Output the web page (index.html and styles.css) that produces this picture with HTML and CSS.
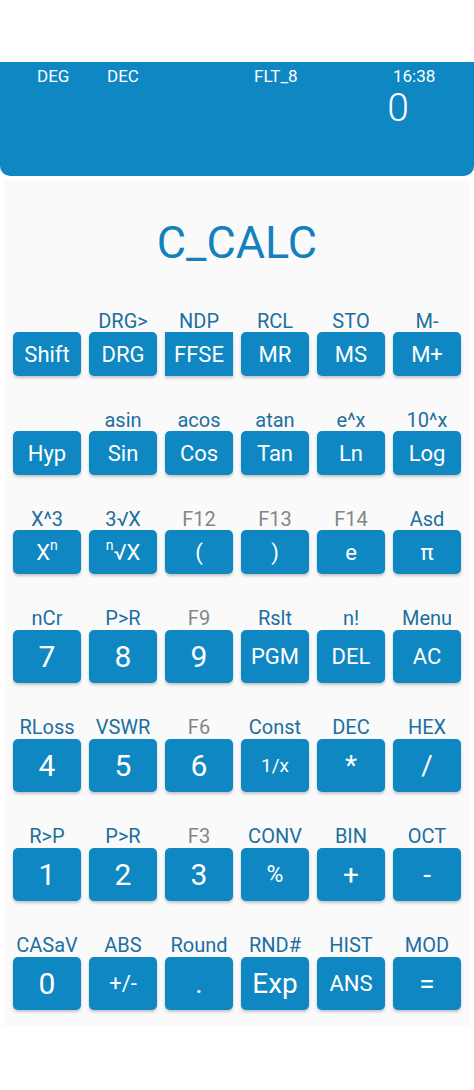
FILE: index.html
```html
<!DOCTYPE html>
<html>
<head>
<meta charset="utf-8">
<link rel="stylesheet" href="styles.css">
</head>
<body>
<div class="header">
  <div class="status">
    <span class="st st-deg">DEG</span>
    <span class="st st-dec">DEC</span>
    <span class="st st-flt">FLT_8</span>
    <span class="st st-time">16:38</span>
  </div>
  <div class="display"><span class="result">0</span></div>
</div>
<div class="panel">
  <div class="title">C_CALC</div>
  <div class="rows">
    <div class="row">
      <div class="cell"><div class="lbl"></div><div class="btn">Shift</div></div>
      <div class="cell"><div class="lbl">DRG&gt;</div><div class="btn">DRG</div></div>
      <div class="cell"><div class="lbl">NDP</div><div class="btn sq">FFSE</div></div>
      <div class="cell"><div class="lbl">RCL</div><div class="btn">MR</div></div>
      <div class="cell"><div class="lbl">STO</div><div class="btn">MS</div></div>
      <div class="cell"><div class="lbl">M-</div><div class="btn">M+</div></div>
    </div>
    <div class="row">
      <div class="cell"><div class="lbl"></div><div class="btn">Hyp</div></div>
      <div class="cell"><div class="lbl">asin</div><div class="btn">Sin</div></div>
      <div class="cell"><div class="lbl">acos</div><div class="btn">Cos</div></div>
      <div class="cell"><div class="lbl">atan</div><div class="btn">Tan</div></div>
      <div class="cell"><div class="lbl">e^x</div><div class="btn">Ln</div></div>
      <div class="cell"><div class="lbl">10^x</div><div class="btn">Log</div></div>
    </div>
    <div class="row">
      <div class="cell"><div class="lbl">X^3</div><div class="btn">X<span class="sup">n</span></div></div>
      <div class="cell"><div class="lbl">3√X</div><div class="btn"><span class="sup">n</span>√X</div></div>
      <div class="cell"><div class="lbl gray">F12</div><div class="btn">(</div></div>
      <div class="cell"><div class="lbl gray">F13</div><div class="btn">)</div></div>
      <div class="cell"><div class="lbl gray">F14</div><div class="btn">e</div></div>
      <div class="cell"><div class="lbl">Asd</div><div class="btn">π</div></div>
    </div>
    <div class="row big">
      <div class="cell"><div class="lbl">nCr</div><div class="btn num">7</div></div>
      <div class="cell"><div class="lbl">P&gt;R</div><div class="btn num">8</div></div>
      <div class="cell"><div class="lbl gray">F9</div><div class="btn num">9</div></div>
      <div class="cell"><div class="lbl">Rslt</div><div class="btn">PGM</div></div>
      <div class="cell"><div class="lbl">n!</div><div class="btn">DEL</div></div>
      <div class="cell"><div class="lbl">Menu</div><div class="btn">AC</div></div>
    </div>
    <div class="row big">
      <div class="cell"><div class="lbl">RLoss</div><div class="btn num">4</div></div>
      <div class="cell"><div class="lbl">VSWR</div><div class="btn num">5</div></div>
      <div class="cell"><div class="lbl gray">F6</div><div class="btn num">6</div></div>
      <div class="cell"><div class="lbl">Const</div><div class="btn small">1/x</div></div>
      <div class="cell"><div class="lbl">DEC</div><div class="btn op">*</div></div>
      <div class="cell"><div class="lbl">HEX</div><div class="btn op">/</div></div>
    </div>
    <div class="row big">
      <div class="cell"><div class="lbl">R&gt;P</div><div class="btn num">1</div></div>
      <div class="cell"><div class="lbl">P&gt;R</div><div class="btn num">2</div></div>
      <div class="cell"><div class="lbl gray">F3</div><div class="btn num">3</div></div>
      <div class="cell"><div class="lbl">CONV</div><div class="btn pct">%</div></div>
      <div class="cell"><div class="lbl">BIN</div><div class="btn op">+</div></div>
      <div class="cell"><div class="lbl">OCT</div><div class="btn op">-</div></div>
    </div>
    <div class="row big">
      <div class="cell"><div class="lbl">CASaV</div><div class="btn num">0</div></div>
      <div class="cell"><div class="lbl">ABS</div><div class="btn">+/-</div></div>
      <div class="cell"><div class="lbl">Round</div><div class="btn op">.</div></div>
      <div class="cell"><div class="lbl">RND#</div><div class="btn exp">Exp</div></div>
      <div class="cell"><div class="lbl">HIST</div><div class="btn">ANS</div></div>
      <div class="cell"><div class="lbl">MOD</div><div class="btn op">=</div></div>
    </div>
  </div>
</div>
</body>
</html>
```

FILE: styles.css
```css
html, body {
  margin: 0;
  padding: 0;
  background: #ffffff;
  font-family: Roboto, "Liberation Sans", sans-serif;
}

.header {
  margin-top: 62px;
  height: 114px;
  background: #0f87c2;
  border-radius: 0 0 10px 10px;
  color: #ffffff;
  box-sizing: border-box;
  padding-top: 4px;
  overflow: hidden;
}

.status {
  display: flex;
  height: 20px;
  line-height: 20px;
  font-size: 17px;
}

.st-deg { margin-left: 37px; width: 70px; }
.st-dec { width: 147px; }
.st-flt { width: 139px; }

.display {
  display: flex;
  justify-content: flex-end;
  padding-right: 65px;
  padding-top: 4px;
  height: 36px;
  line-height: 36px;
}

.result {
  font-size: 39px;
  font-weight: 300;
}

.panel {
  margin: 4px 4px 0 4px;
  background: #fafafa;
  padding: 37px 9px 16px 9px;
}

.title {
  text-align: center;
  font-size: 45px;
  line-height: 52px;
  color: #1281be;
  margin-bottom: 41px;
}

.rows {
  display: flex;
  flex-direction: column;
  gap: 33px;
}

.row {
  display: flex;
  gap: 8px;
}

.cell {
  width: 68px;
  display: flex;
  flex-direction: column;
  align-items: center;
}

.lbl {
  height: 22px;
  line-height: 22px;
  font-size: 20px;
  color: #1d6fa0;
  white-space: nowrap;
  text-align: center;
}

.lbl.gray {
  color: #858585;
}

.big .lbl {
  height: 23px;
  line-height: 23px;
}

.btn {
  width: 68px;
  height: 44px;
  background: #0f87c2;
  color: #ffffff;
  border-radius: 5px;
  box-shadow: 0 2px 3px rgba(0, 0, 0, 0.22);
  display: flex;
  align-items: center;
  justify-content: center;
  font-size: 22px;
  white-space: nowrap;
}

.btn.sq {
  border-radius: 0;
}

.big .btn {
  height: 53px;
}

.btn.num {
  font-size: 30px;
}

.btn.op {
  font-size: 28px;
}

.btn.small {
  font-size: 19px;
}

.btn.pct {
  font-size: 23px;
}

.btn.exp {
  font-size: 28px;
}

.sup {
  font-size: 14px;
  position: relative;
  top: -7px;
}
```
